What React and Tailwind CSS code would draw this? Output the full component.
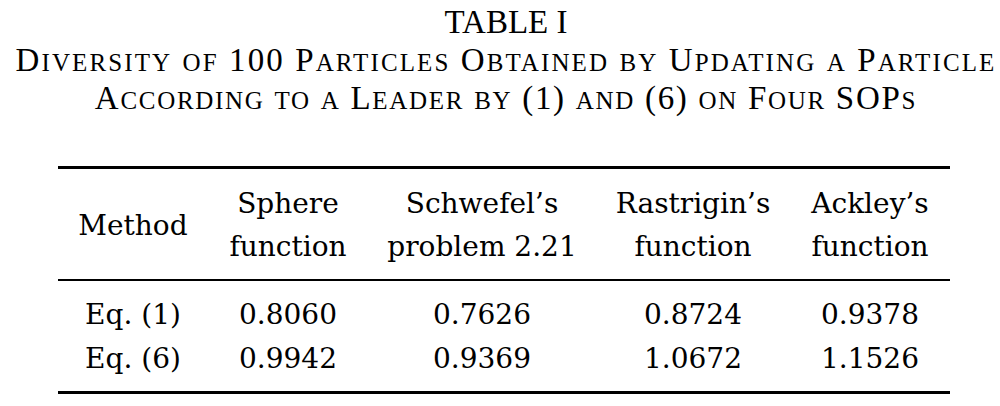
function SC({ text }) {
  const parts = [];
  let buf = "";
  let mode = null;
  for (const ch of text) {
    const m = ch >= "a" && ch <= "z" ? "s" : "b";
    if (m !== mode && buf) {
      parts.push([mode, buf]);
      buf = "";
    }
    mode = m;
    buf += ch;
  }
  if (buf) parts.push([mode, buf]);
  return (
    <>
      {parts.map(([m, t], i) =>
        m === "s" ? (
          <span key={i} className="text-[25px] uppercase">{t}</span>
        ) : (
          <span key={i}>{t}</span>
        )
      )}
    </>
  );
}

export default function App() {
  const cols = ["w-[150px]", "w-[160px]", "w-[228px]", "w-[194px]", "w-[160px]"];
  const header = [
    ["Method"],
    ["Sphere", "function"],
    ["Schwefel\u2019s", "problem 2.21"],
    ["Rastrigin\u2019s", "function"],
    ["Ackley\u2019s", "function"],
  ];
  const rows = [
    ["Eq. (1)", "0.8060", "0.7626", "0.8724", "0.9378"],
    ["Eq. (6)", "0.9942", "0.9369", "1.0672", "1.1526"],
  ];
  return (
    <div className="w-[1000px] h-[406px] bg-white text-black overflow-hidden">
      <div className="pt-[3px] pl-[12px] text-center font-['Liberation_Serif',serif] text-[33px] leading-[38px]">
        <div className="h-[38px]">TABLE I</div>
        <div className="h-[38px] whitespace-nowrap tracking-[2.1px]">
          <SC text="Diversity of 100 Particles Obtained by Updating a Particle" />
        </div>
        <div className="h-[38px] whitespace-nowrap tracking-[1.7px]">
          <SC text="According to a Leader by (1) and (6) on Four SOPs" />
        </div>
      </div>
      <div className="ml-[58px] mt-[49px] w-[892px] font-['DejaVu_Serif',serif] text-[28px]">
        <div className="h-[3px] bg-black" />
        <div className="flex items-center pt-[13px] pb-[11px]">
          {header.map((h, i) => (
            <div key={i} className={`${cols[i]} flex flex-col items-center leading-[43px] whitespace-nowrap`}>
              {h.map((t, j) => (
                <div key={j}>{t}</div>
              ))}
            </div>
          ))}
        </div>
        <div className="h-[2px] bg-black" />
        <div className="pt-[12px] pb-[10px]">
          {rows.map((r, i) => (
            <div key={i} className="flex leading-[44px]">
              {r.map((t, j) => (
                <div key={j} className={`${cols[j]} text-center whitespace-nowrap`}>{t}</div>
              ))}
            </div>
          ))}
        </div>
        <div className="h-[3px] bg-black" />
      </div>
    </div>
  );
}
